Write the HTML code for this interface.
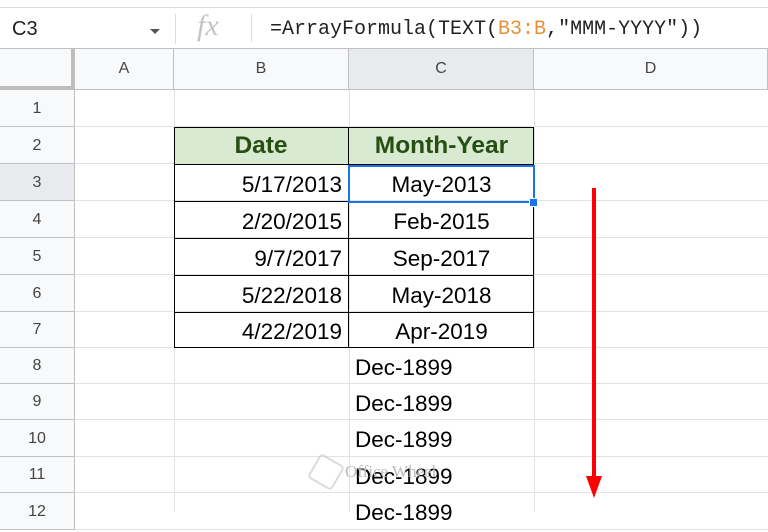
<!DOCTYPE html>
<html><head><style>
body{margin:0;width:768px;height:512px;overflow:hidden;background:#fff;font-family:"Liberation Sans",Arial,sans-serif;position:relative}
.a{position:absolute}
.rh{position:absolute;left:0;width:75px;background:#f8f9fa;border-bottom:1px solid #c0c0c0;border-right:1px solid #c0c0c0;text-align:center;font-size:16px;color:#444;box-sizing:border-box}
.ch{position:absolute;top:49px;height:41px;background:#f8f9fa;border-right:1px solid #c0c0c0;border-bottom:1px solid #c0c0c0;box-sizing:border-box;text-align:center;line-height:40px;font-size:16px;color:#444}
.gl{position:absolute;background:#e2e2e2}
.c{position:absolute;box-sizing:border-box;font-size:22.5px;color:#000;line-height:38px}
</style></head><body>
<div class="a" style="left:0;top:0;width:768px;height:7px;background:#fff;border-bottom:1px solid #dadce0"></div>
<div class="a" style="left:12px;top:18px;font-size:20px;color:#222">C3</div>
<div class="a" style="left:150px;top:29px;width:0;height:0;border-left:5px solid transparent;border-right:5px solid transparent;border-top:5px solid #555"></div>
<div class="a" style="left:175px;top:14px;width:1px;height:30px;background:#dadce0"></div>
<div class="a" style="left:197px;top:9px;font-family:'Liberation Serif',serif;font-style:italic;font-size:30px;color:#c4c4c4">fx</div>
<div class="a" style="left:251px;top:14px;width:1px;height:28px;background:#dadce0"></div>
<div class="a" style="left:270px;top:18px;font-family:'Liberation Mono',monospace;font-size:20px;color:#222">=ArrayFormula(TEXT(<span style="color:#e69138">B3:B</span>,"MMM-YYYY"))</div>
<div class="a" style="left:0;top:48px;width:768px;height:1px;background:#c0c0c0"></div>
<div class="ch" style="left:0;width:75px;border-right:4px solid #bdbdbd;border-bottom:4px solid #bdbdbd"></div>
<div class="ch" style="left:75px;width:99px">A</div>
<div class="ch" style="left:174px;width:175px">B</div>
<div class="ch" style="left:349px;width:185px;background:#e8eaed">C</div>
<div class="ch" style="left:534px;width:234px">D</div>
<div class="gl" style="left:174px;top:90px;width:1px;height:422px"></div>
<div class="gl" style="left:349px;top:90px;width:1px;height:422px"></div>
<div class="gl" style="left:534px;top:90px;width:1px;height:422px"></div>
<div id="rows"></div>
<script>
var tops=[90,127,164,201,238,275,312,348,384,420,457,493,530];
var h='';
for(var i=0;i<12;i++){var t=tops[i],hh=tops[i+1]-t;
h+='<div class="rh" style="top:'+t+'px;height:'+hh+'px;line-height:'+hh+'px;'+(i==2?'background:#e8eaed;':'')+'">'+(i+1)+'</div>';
h+='<div class="gl" style="left:75px;top:'+(t+hh-1)+'px;width:693px;height:1px"></div>';}
document.getElementById('rows').innerHTML=h;
</script>
<div class="a" style="left:174px;top:127px;width:360px;height:37px;background:#d9ead3"></div>
<div class="a" style="left:174px;top:127px;width:360px;height:221px;border:1px solid #000;box-sizing:border-box"></div>
<div class="a" style="left:348px;top:127px;width:1px;height:221px;background:#000"></div>
<div class="a" style="left:174px;top:164px;width:360px;height:1px;background:#000"></div>
<div class="a" style="left:174px;top:201px;width:360px;height:1px;background:#000"></div>
<div class="a" style="left:174px;top:238px;width:360px;height:1px;background:#000"></div>
<div class="a" style="left:174px;top:275px;width:360px;height:1px;background:#000"></div>
<div class="a" style="left:174px;top:312px;width:360px;height:1px;background:#000"></div>
<div class="c" style="left:174px;top:127px;width:174px;text-align:center;font-weight:bold;color:#274e13;font-size:24.5px">Date</div>
<div class="c" style="left:349px;top:127px;width:185px;text-align:center;font-weight:bold;color:#274e13;font-size:24.5px">Month-Year</div>
<div class="c" style="left:174px;top:166px;width:168px;text-align:right">5/17/2013</div>
<div class="c" style="left:174px;top:203px;width:168px;text-align:right">2/20/2015</div>
<div class="c" style="left:174px;top:240px;width:168px;text-align:right">9/7/2017</div>
<div class="c" style="left:174px;top:277px;width:168px;text-align:right">5/22/2018</div>
<div class="c" style="left:174px;top:313px;width:168px;text-align:right">4/22/2019</div>
<div class="c" style="left:349px;top:166px;width:185px;text-align:center">May-2013</div>
<div class="c" style="left:349px;top:203px;width:185px;text-align:center">Feb-2015</div>
<div class="c" style="left:349px;top:240px;width:185px;text-align:center">Sep-2017</div>
<div class="c" style="left:349px;top:277px;width:185px;text-align:center">May-2018</div>
<div class="c" style="left:349px;top:313px;width:185px;text-align:center">Apr-2019</div>
<div class="c" style="left:355px;top:349px">Dec-1899</div>
<div class="c" style="left:355px;top:385px">Dec-1899</div>
<div class="c" style="left:355px;top:421px">Dec-1899</div>
<div class="c" style="left:355px;top:458px">Dec-1899</div>
<div class="c" style="left:355px;top:494px">Dec-1899</div>
<div class="a" style="left:348px;top:165px;width:187px;height:38px;border:2px solid #1a73e8;box-sizing:border-box"></div>
<div class="a" style="left:529px;top:198px;width:7px;height:7px;background:#1a73e8;border:1px solid #fff"></div>
<div class="a" style="left:592px;top:188px;width:4px;height:290px;background:#f00"></div>
<div class="a" style="left:586px;top:476px;width:0;height:0;border-left:8px solid transparent;border-right:8px solid transparent;border-top:22px solid #f00"></div>
<div class="a" style="left:312px;top:458px;width:24px;height:24px;border:2px solid #ccc;border-radius:4px;transform:rotate(30deg);opacity:.7"></div>
<div class="a" style="left:345px;top:462px;font-family:'Liberation Serif',serif;font-size:17px;color:#bbb">Office Wheel</div>
</body></html>
